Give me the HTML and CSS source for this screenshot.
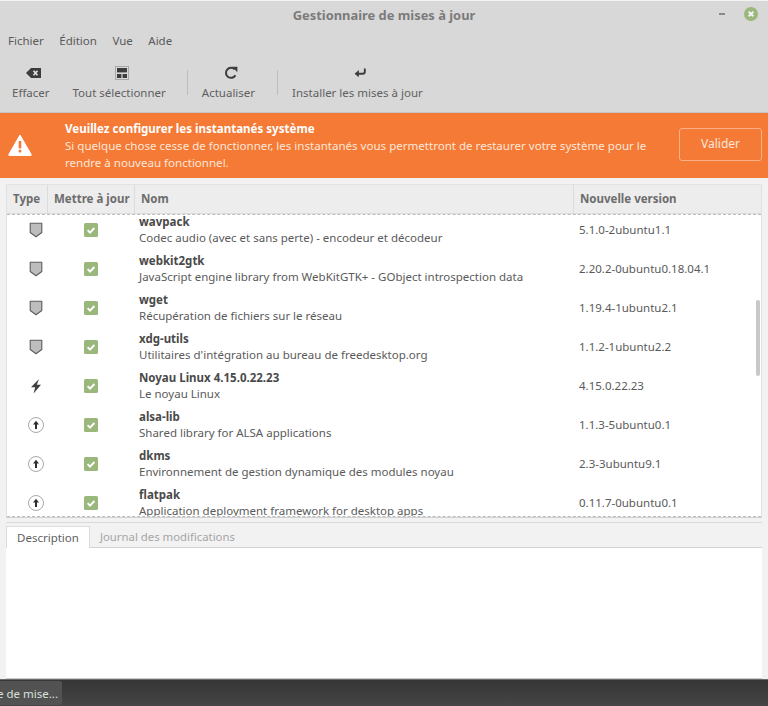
FILE: index.html
```html
<!DOCTYPE html>
<html lang="fr">
<head>
<meta charset="utf-8">
<title>Gestionnaire de mises à jour</title>
<link rel="stylesheet" href="styles.css">
</head>
<body>
<svg class="defs" width="0" height="0" aria-hidden="true">
  <symbol id="shield" viewBox="0 0 14 16"><path d="M1.2 1.2h11.6v9.3L7 14.8 1.2 10.5z" fill="#bdbdbd" stroke="#5d5d5d" stroke-width="1.1" stroke-linejoin="round"/></symbol>
  <symbol id="bolt" viewBox="0 0 14 16"><path d="M10 1 2 9.2h4.2L4.6 15.6 12 6.8H7.8z" fill="#3f3f3f"/></symbol>
  <symbol id="up" viewBox="0 0 16 16"><circle cx="8" cy="8" r="7.5" fill="#fff" stroke="#a8a8a8" stroke-width="1"/><path d="M8 3.8 11 7.6H9V12H7V7.6H5z" fill="#2f2f2f"/></symbol>
  <symbol id="check" viewBox="0 0 14 14"><rect width="14" height="14" rx="1.5" fill="#9ab87c"/><path d="M3.6 7.2 6 9.6l4.4-4.6" fill="none" stroke="#fff" stroke-width="1.9"/></symbol>
</svg>
<div class="window">
  <header class="titlebar">
    <span class="title">Gestionnaire de mises à jour</span>
    <span class="win-controls">
      <span class="minimize"></span>
      <svg class="close" width="14" height="14" viewBox="0 0 14 14"><circle cx="7" cy="7" r="7" fill="#9ab87c"/><path d="M4.7 4.7l4.6 4.6M9.3 4.7 4.7 9.3" stroke="#f2f2f2" stroke-width="2"/></svg>
    </span>
  </header>
  <nav class="menubar">
    <span>Fichier</span><span>Édition</span><span>Vue</span><span>Aide</span>
  </nav>
  <div class="toolbar">
    <div class="tool tool-clear">
      <svg width="16" height="12" viewBox="0 0 16 12"><path d="M5 1h10v10H5L0 6z" fill="#3c3c3c"/><path d="M7.5 3.8l4 4.4M11.5 3.8l-4 4.4" stroke="#e0e0e0" stroke-width="1.7"/></svg>
      <span>Effacer</span>
    </div>
    <div class="tool tool-select">
      <svg width="14" height="14" viewBox="0 0 14 14"><path d="M.5.5h13v13H.5z" fill="none" stroke="#777" stroke-dasharray="1 1"/><rect x="2" y="2" width="10" height="4.4" fill="#3c3c3c"/><rect x="2" y="8" width="4.4" height="4" fill="#3c3c3c"/><rect x="7.6" y="8" width="4.4" height="4" fill="#3c3c3c"/></svg>
      <span>Tout sélectionner</span>
    </div>
    <i class="sep"></i>
    <div class="tool tool-refresh">
      <svg width="14" height="14" viewBox="0 0 14 14"><path d="M11.4 9.2A5 5 0 1 1 10.6 3.4" fill="none" stroke="#3c3c3c" stroke-width="2"/><path d="M8 .8h5.4v5.4z" fill="#3c3c3c"/></svg>
      <span>Actualiser</span>
    </div>
    <i class="sep"></i>
    <div class="tool tool-install">
      <svg width="12" height="14" viewBox="0 0 12 11"><path d="M10.8 1v3.2a2 2 0 0 1-2 2H3" fill="none" stroke="#3c3c3c" stroke-width="1.9"/><path d="M4.8 2.6v7.2L.6 6.2z" fill="#3c3c3c"/></svg>
      <span>Installer les mises à jour</span>
    </div>
  </div>
  <section class="banner">
    <svg class="warn" width="24" height="22" viewBox="0 0 24 22"><path d="M12 1 23.2 20.5a.6.6 0 0 1-.5.9H1.3a.6.6 0 0 1-.5-.9z" fill="#fff" stroke="#fff" stroke-linejoin="round"/><rect x="10.7" y="7" width="2.6" height="7.4" fill="#f47a35"/><rect x="10.7" y="15.8" width="2.6" height="2.6" fill="#f47a35"/></svg>
    <div class="banner-text">
      <strong>Veuillez configurer les instantanés système</strong>
      <p>Si quelque chose cesse de fonctionner, les instantanés vous permettront de restaurer votre système pour le rendre à nouveau fonctionnel.</p>
    </div>
    <span class="validate">Valider</span>
  </section>
  <section class="table">
    <div class="row-grid thead">
      <span>Type</span><span>Mettre à jour</span><span>Nom</span><span>Nouvelle version</span>
    </div>
    <div class="tbody">
      <div class="row-grid row"><svg class="ty"><use href="#shield"/></svg><svg class="ck"><use href="#check"/></svg><div class="name"><b>wavpack</b><span>Codec audio (avec et sans perte) - encodeur et décodeur</span></div><span class="ver">5.1.0-2ubuntu1.1</span></div>
      <div class="row-grid row"><svg class="ty"><use href="#shield"/></svg><svg class="ck"><use href="#check"/></svg><div class="name"><b>webkit2gtk</b><span>JavaScript engine library from WebKitGTK+ - GObject introspection data</span></div><span class="ver">2.20.2-0ubuntu0.18.04.1</span></div>
      <div class="row-grid row"><svg class="ty"><use href="#shield"/></svg><svg class="ck"><use href="#check"/></svg><div class="name"><b>wget</b><span>Récupération de fichiers sur le réseau</span></div><span class="ver">1.19.4-1ubuntu2.1</span></div>
      <div class="row-grid row"><svg class="ty"><use href="#shield"/></svg><svg class="ck"><use href="#check"/></svg><div class="name"><b>xdg-utils</b><span>Utilitaires d'intégration au bureau de freedesktop.org</span></div><span class="ver">1.1.2-1ubuntu2.2</span></div>
      <div class="row-grid row"><svg class="ty"><use href="#bolt"/></svg><svg class="ck"><use href="#check"/></svg><div class="name"><b>Noyau Linux 4.15.0.22.23</b><span>Le noyau Linux</span></div><span class="ver">4.15.0.22.23</span></div>
      <div class="row-grid row"><svg class="ty"><use href="#up"/></svg><svg class="ck"><use href="#check"/></svg><div class="name"><b>alsa-lib</b><span>Shared library for ALSA applications</span></div><span class="ver">1.1.3-5ubuntu0.1</span></div>
      <div class="row-grid row"><svg class="ty"><use href="#up"/></svg><svg class="ck"><use href="#check"/></svg><div class="name"><b>dkms</b><span>Environnement de gestion dynamique des modules noyau</span></div><span class="ver">2.3-3ubuntu9.1</span></div>
      <div class="row-grid row"><svg class="ty"><use href="#up"/></svg><svg class="ck"><use href="#check"/></svg><div class="name"><b>flatpak</b><span>Application deployment framework for desktop apps</span></div><span class="ver">0.11.7-0ubuntu0.1</span></div>
      <span class="scrollbar"></span>
    </div>
  </section>
  <section class="details">
    <div class="tabs">
      <span class="tab active">Description</span>
      <span class="tab">Journal des modifications</span>
    </div>
    <div class="tab-body"></div>
  </section>
</div>
<footer class="taskbar">
  <div class="task"><span>Gestionnaire de mise...</span></div>
</footer>
</body>
</html>
```
FILE: styles.css
```css
* { box-sizing: border-box; }
html, body { margin: 0; height: 100%; }
body {
  width: 768px;
  height: 706px;
  overflow: hidden;
  display: flex;
  flex-direction: column;
  font-family: "Noto Sans", sans-serif;
  font-size: 12px;
  color: #4a4a4a;
  background: #f2f2f2;
}
.defs { position: absolute; }
.window { flex: 1; display: flex; flex-direction: column; min-height: 0; }

.titlebar {
  height: 30px;
  flex: none;
  background: #d8d8d8;
  border-top: 1px solid #f4f4f4;
  display: flex;
  justify-content: center;
  align-items: center;
  padding-bottom: 2px;
  position: relative;
}
.title { font-weight: 700; font-size: 12.9px; color: #7b7b7b; }
.win-controls { position: absolute; right: 10px; top: 6px; display: flex; align-items: center; gap: 19px; }
.minimize { width: 6px; height: 2px; background: #8a8a8a; }
.close { display: block; }

.menubar {
  height: 25px;
  flex: none;
  background: #d8d8d8;
  display: flex;
  align-items: center;
  gap: 15.5px;
  padding: 0 8px 5px;
  font-size: 11.5px;
  color: #5a5a5a;
}

.toolbar {
  height: 58px;
  flex: none;
  background: #d8d8d8;
  border-bottom: 1px solid #c4c4c4;
  display: flex;
  align-items: flex-start;
  padding: 11px 0 0 12px;
  color: #5f5f5f;
}
.tool { display: flex; flex-direction: column; align-items: center; font-size: 11.5px; line-height: 16px; }
.tool svg { height: 14px; margin: 0 0 5px 6px; }
.tool-select { margin-left: 23px; }
.tool-refresh { margin-left: 14px; }
.tool-install { margin-left: 14px; }
.sep { width: 1px; height: 25px; margin: 4px 0 0 21px; background: #bdbdbd; }
.tool-refresh + .sep { margin-left: 22px; }

.banner {
  height: 65px;
  flex: none;
  background: #f47a35;
  color: #fff;
  display: flex;
  align-items: center;
  padding: 0 6px 0 8px;
}
.warn { flex: none; margin: -2px 33px 0 0; }
.banner-text { flex: 1; font-size: 11.55px; line-height: 17px; color: #fde7da; }
.banner-text strong { display: block; color: #fff; line-height: 16px; }
.banner-text p { margin: 0; width: 600px; }
.validate {
  width: 83px;
  height: 33px;
  margin-top: -2px;
  border: 1px solid #f9b08b;
  border-radius: 3px;
  display: flex;
  align-items: center;
  justify-content: center;
  padding-bottom: 2px;
  color: #fde7da;
  font-size: 12px;
}

.table {
  margin: 6px 6px 0;
  height: 334px;
  flex: none;
  background: #fff;
  border: 1px solid #e2e2e2;
  border-bottom-color: #d0d0d0;
  display: flex;
  flex-direction: column;
}
.row-grid { display: grid; grid-template-columns: 40px 87px 439px 1fr; align-items: center; }
.thead {
  height: 29px;
  flex: none;
  background: #ededed;
  border-bottom: 1px solid #dcdcdc;
  font-weight: 700;
  font-size: 11.5px;
  color: #6c6c6c;
}
.thead span { height: 100%; display: flex; align-items: center; padding: 0 0 2px 6px; border-left: 1px solid #dcdcdc; white-space: nowrap; }
.thead span:first-child { border-left: 0; }

.tbody {
  flex: 1;
  min-height: 0;
  overflow: hidden;
  position: relative;
  border-top: 1px dashed #bcbcbc;
  border-bottom: 1px dashed #bcbcbc;
}
.row { height: 39px; }
.row:first-child { margin-top: -4px; }
.ty { width: 16px; height: 16px; justify-self: start; margin: -2px 0 0 21px; }
.ck { width: 14px; height: 14px; justify-self: center; margin-top: -1px; }
.name { display: flex; flex-direction: column; padding-left: 5px; line-height: 16px; font-size: 11.5px; margin-top: -2px; }
.name b { color: #4a4a4a; line-height: 17px; }
.name span { color: #5a5a5a; white-space: nowrap; }
.ver { padding-left: 6px; font-size: 11.5px; color: #5a5a5a; margin-top: -3px; }
.scrollbar {
  position: absolute;
  right: 1px;
  top: 85px;
  width: 4px;
  height: 76px;
  border-radius: 2px;
  background: #c8c8c8;
}

.details { flex: 1; min-height: 0; margin: 4px 6px 0; padding-top: 3px; border-top: 1px solid #dadada; display: flex; flex-direction: column; }
.tabs { height: 22px; flex: none; display: flex; border-bottom: 1px solid #d4d4d4; font-size: 11.35px; }
.tab { padding: 0 10px 2px; display: flex; align-items: center; color: #a6a6a6; height: 22px; white-space: nowrap; }
.tab.active { background: #fff; color: #5f5f5f; border: 1px solid #dcdcdc; border-bottom: 0; height: 23px; font-size: 11.5px; }
.tab-body { flex: 1; background: #fff; border-bottom: 1px solid #c8c8c8; }

.taskbar {
  height: 27px;
  flex: none;
  background: linear-gradient(#363636, #454545);
  border-top: 1px solid #6b6b6b;
  position: relative;
  overflow: hidden;
}
.task {
  position: absolute;
  right: 706px;
  top: 1px;
  width: 160px;
  height: 24px;
  background: #525252;
  border-radius: 0 2px 2px 0;
  display: flex;
  align-items: center;
  justify-content: flex-end;
  padding-right: 4px;
  color: #d8e0dc;
  font-size: 11.5px;
  white-space: nowrap;
}
```
